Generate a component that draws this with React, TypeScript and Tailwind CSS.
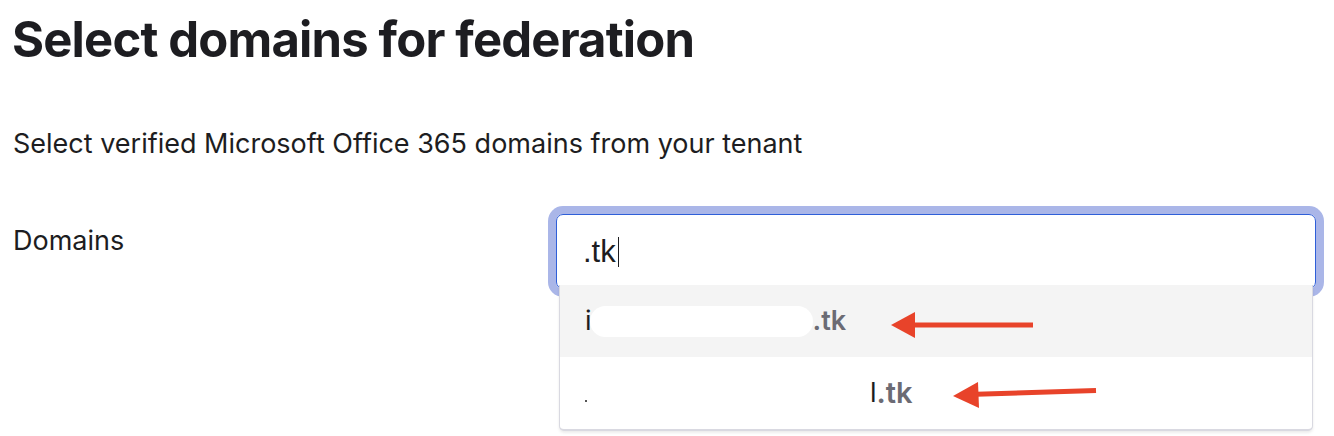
import { useState } from 'react';

const RedArrows = () => (
  <svg
    className="pointer-events-none absolute left-0 top-0 z-20"
    width={1334}
    height={436}
    viewBox="0 0 1334 436"
  >
    {/* upper arrow */}
    <line x1={906} y1={325} x2={1033} y2={325} stroke="#e8432a" strokeWidth={5} />
    <polygon points="891,325 915,312 915,338" fill="#e8432a" />
    {/* lower arrow, slightly tilted */}
    <line x1={968} y1={394.5} x2={1096} y2={390.5} stroke="#e8432a" strokeWidth={5} />
    <polygon points="953,396 978,382 979,408" fill="#e8432a" />
  </svg>
);

export default function App() {
  const [query] = useState('.tk');

  return (
    <div className="relative h-[436px] w-[1334px] overflow-hidden bg-white font-['Inter',sans-serif] text-[#1d1d21]">
      <h1 className="pl-[12px] pt-[15px] text-[49px] font-bold leading-[50px] tracking-[-0.017em]">
        Select domains for federation
      </h1>

      <p className="mt-[63px] pl-[13px] text-[27px] leading-[32px]">
        Select verified Microsoft Office 365 domains from your tenant
      </p>

      <div className="mt-[54px] flex">
        <label className="w-[556px] pl-[13px] pt-[11px] text-[27px] leading-[32px]">Domains</label>

        <div className="relative w-[760px]">
          {/* focused search input */}
          <div className="flex h-[75px] items-center rounded-[7px] border-[1.5px] border-[#2f5fd8] pl-[26px] shadow-[0_0_0_8px_#aab6e8]">
            <span className="font-['Liberation_Sans',Arial,sans-serif] text-[31px] leading-[32px] text-[#1d1d21]">
              {query}
            </span>
            <span className="ml-[2px] h-[30px] w-[1.5px] bg-[#1d1d21]" />
          </div>

          {/* suggestions */}
          <ul className="absolute left-[3px] right-[3px] top-[71px] z-10 overflow-hidden rounded-b-[5px] border-x-[1.5px] border-b-[2px] border-[#d9d9e1] bg-white shadow-[0_2px_3px_rgba(0,0,0,0.08)]">
            <li className="flex h-[72px] items-center bg-[#f4f4f4] pl-[25px] text-[27px] leading-[30px]">
              <span className="text-[#1d1d21]">i</span>
              <span className="ml-[-2px] h-[31px] w-[223px] rounded-full bg-white" />
              <span className="font-semibold text-[#6b6b74]">.tk</span>
            </li>
            <li className="flex h-[72px] items-center pl-[25px] text-[27px] leading-[30px]">
              <span className="mt-[16px] h-[2px] w-[2px] bg-[#555]" />
              <span className="w-[283px]" />
              <span className="text-[#1d1d21]">l</span>
              <span className="text-[29px] font-semibold text-[#6b6b74]">.tk</span>
            </li>
          </ul>
        </div>
      </div>

      <RedArrows />
    </div>
  );
}
